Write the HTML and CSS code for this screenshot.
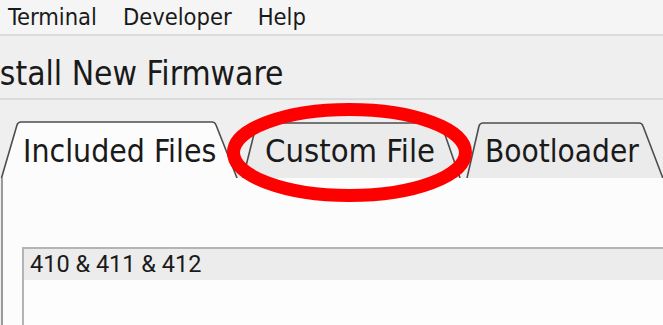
FILE: index.html
```html
<!DOCTYPE html>
<html>
<head>
<meta charset="utf-8">
<link rel="stylesheet" href="styles.css">
</head>
<body>
<div class="menubar">
  <span class="menu-item">Terminal</span>
  <span class="menu-item">Developer</span>
  <span class="menu-item">Help</span>
</div>
<div class="titlebar">
  <h1 class="title">Install New Firmware</h1>
</div>
<div class="tabstrip">
  <svg class="tab-shapes" width="663" height="78" viewBox="0 0 663 78">
    <path d="M243,78 L256,26 Q257,23 260,23 L438,23 Q441,23 442,26 L460,78 Z" fill="#ebebeb"/>
    <path d="M243,78 L256,26 Q257,23 260,23 L438,23 Q441,23 442,26 L460,78" fill="none" stroke="#4d4d4d" stroke-width="1.6"/>
    <path d="M467,78 L479,26 Q480,23 483,23 L639,23 Q642,23 643,26 L663,80 L663,78 Z" fill="#ebebeb"/>
    <path d="M467,78 L479,26 Q480,23 483,23 L639,23 Q642,23 643,26 L664,81" fill="none" stroke="#4d4d4d" stroke-width="1.6"/>
    <path d="M1,78 L17,25 Q18,22 21,22 L212,22 Q215,22 216,25 L237,78 Z" fill="#fcfcfc"/>
    <path d="M1.5,78 L17,25 Q18,22 21,22 L212,22 Q215,22 216,25 L237,78" fill="none" stroke="#4d4d4d" stroke-width="1.6"/>
  </svg>
  <div class="tab-labels">
    <span class="tab tab-active">Included Files</span>
    <span class="tab tab-custom">Custom File</span>
    <span class="tab tab-boot">Bootloader</span>
  </div>
</div>
<div class="panel">
  <div class="listbox">
    <div class="list-row selected"><span class="row-text">410 &amp; 411 &amp; 412</span></div>
  </div>
</div>
<svg class="annotation" width="260" height="115" viewBox="0 0 260 115">
  <ellipse cx="129.5" cy="57.5" rx="116" ry="43" fill="none" stroke="#fe0000" stroke-width="13"/>
</svg>
</body>
</html>
```
FILE: styles.css
```css
html, body {
  margin: 0;
  padding: 0;
}
body {
  width: 663px;
  height: 325px;
  overflow: hidden;
  background: #f0f0f0;
  position: relative;
  font-family: "DejaVu Sans Condensed", "DejaVu Sans", sans-serif;
  color: #1a1a1a;
}
.menubar {
  height: 34px;
  background: #f5f5f5;
  border-bottom: 2px solid #dcdcdc;
  display: flex;
  gap: 26px;
  padding-left: 8px;
}
.menu-item {
  font-size: 23.5px;
  line-height: 34px;
}
.titlebar {
  height: 62px;
  border-bottom: 2px solid #dadada;
  background: #efefef;
  overflow: hidden;
}
.title {
  margin: 0 0 0 -28px;
  font-weight: normal;
  font-size: 33.3px;
  line-height: 38px;
  padding-top: 19px;
  white-space: nowrap;
}
.tabstrip {
  display: grid;
  height: 78px;
  background: #efefef;
}
.tab-shapes {
  grid-area: 1 / 1;
  display: block;
}
.tab-labels {
  grid-area: 1 / 1;
  display: flex;
  padding-top: 33px;
}
.tab {
  font-size: 32.5px;
  line-height: 36px;
  white-space: nowrap;
}
.tab-active {
  width: 242px;
  padding-left: 23px;
  box-sizing: border-box;
  font-size: 31.7px;
}
.tab-custom {
  width: 221px;
  padding-left: 23px;
  box-sizing: border-box;
}
.tab-boot {
  padding-left: 22px;
  font-size: 31.3px;
}
.panel {
  height: 147px;
  background: #fcfcfc;
  border-left: 2px solid #9a9a9a;
  margin-left: 1px;
  padding-top: 69px;
  box-sizing: border-box;
}
.listbox {
  margin-left: 19px;
  width: 700px;
  height: 100px;
  background: #fdfdfd;
  border-top: 2px solid #b4b4b4;
  border-left: 2px solid #b4b4b4;
}
.list-row {
  height: 31px;
  padding-left: 6px;
  font-family: Roboto, "Noto Sans", sans-serif;
  font-size: 23.5px;
  line-height: 31px;
  color: #1a1a1a;
}
.list-row.selected {
  background: #ececec;
}
.annotation {
  position: absolute;
  left: 220px;
  top: 95px;
}
```
